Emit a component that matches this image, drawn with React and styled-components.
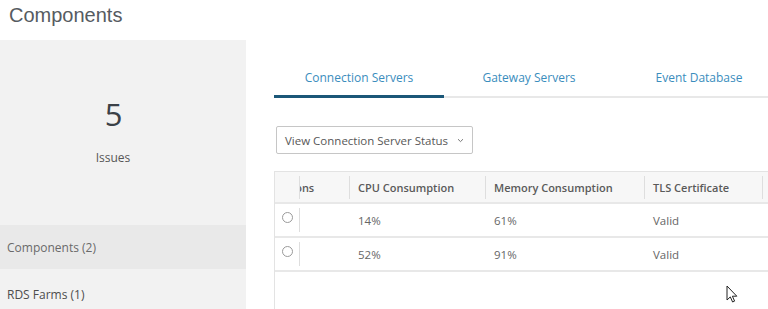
import React from "react";
import styled, { createGlobalStyle } from "styled-components";

const Global = createGlobalStyle`
  html, body { margin: 0; padding: 0; background: #fff; }
  body { font-family: "Open Sans", "Noto Sans", sans-serif; overflow: hidden; }
  * { box-sizing: border-box; }
`;

const Page = styled.div`
  position: relative;
  width: 768px;
  height: 309px;
  overflow: hidden;
`;

const Title = styled.h1`
  margin: 0;
  height: 40px;
  padding: 2px 0 0 9px;
  font-family: "Liberation Sans", Arial, sans-serif;
  font-weight: 400;
  font-size: 20px;
  line-height: 26px;
  color: #565b61;
`;

const Body = styled.div`
  display: flex;
  height: 269px;
`;

const Side = styled.aside`
  width: 246px;
  flex: none;
  background: #f2f2f2;
  display: flex;
  flex-direction: column;
  overflow: hidden;
`;

const Summary = styled.div`
  flex: none;
  height: 185px;
  display: flex;
  flex-direction: column;
  align-items: center;
  padding: 54px 20px 0 0;
`;

const Count = styled.div`
  font-size: 31px;
  line-height: 40px;
  color: #3b4147;
  margin-left: 1px;
`;

const CountLabel = styled.div`
  font-size: 12px;
  line-height: 16px;
  margin-top: 16px;
  color: #565656;
`;

const SideItem = styled.div`
  flex: none;
  height: ${(p) => (p.$active ? "44px" : "50px")};
  display: flex;
  align-items: center;
  padding-left: 7px;
  font-size: 12px;
  background: ${(p) => (p.$active ? "#e9e9e9" : "transparent")};
  color: ${(p) => (p.$active ? "#6a6a6a" : "#4d4d4d")};
`;

const Main = styled.main`
  flex: 1;
  padding-left: 28px;
  min-width: 0;
`;

const Tabs = styled.div`
  display: flex;
  margin-top: 18px;
  border-bottom: 2px solid #e8e8e8;
  width: 600px;
`;

const Tab = styled.div`
  width: 170px;
  flex: none;
  height: 40px;
  display: flex;
  align-items: center;
  justify-content: center;
  font-size: 12px;
  color: #3a8dbd;
  margin-bottom: -2px;
  border-bottom: 3px solid ${(p) => (p.$active ? "#1b5778" : "transparent")};
  padding-top: 2px;
`;

const SelectBox = styled.div`
  margin: 28px 0 0 2px;
  width: 197px;
  height: 28px;
  border: 1px solid #c6c6c6;
  border-radius: 2px;
  display: flex;
  align-items: center;
  justify-content: space-between;
  padding: 0 8px 0 8px;
  font-size: 11.5px;
  color: #575757;
  background: #fff;
`;

const Table = styled.div`
  margin-top: 17px;
  width: 520px;
  height: 160px;
  border: 1px solid #e3e3e3;
  border-right: none;
`;

const Row = styled.div`
  display: flex;
  height: ${(p) => (p.$head ? "32px" : "34px")};
  background: ${(p) => (p.$head ? "#f7f7f7" : "#fff")};
  border-bottom: 2px solid #e8e8e8;
`;

const Cell = styled.div`
  width: ${(p) => p.$w}px;
  flex: none;
  padding: ${(p) => (p.$head ? "4px 0 3px" : "4px 0")};
  overflow: hidden;
`;

const CellInner = styled.div`
  height: 100%;
  border-right: ${(p) => (p.$sep ? "1px solid #dedede" : "none")};
  display: flex;
  align-items: ${(p) => (p.$top ? "flex-start" : "center")};
  padding-left: ${(p) => p.$pad ?? 8}px;
  padding-top: ${(p) => (p.$top ? 4 : 0)}px;
  font-size: ${(p) => (p.$head ? "11px" : "11.5px")};
  font-weight: ${(p) => (p.$head ? 600 : 400)};
  white-space: nowrap;
  color: ${(p) => (p.$head ? "#5a5a5a" : "#666")};
`;

const Clipped = styled.span`
  display: inline-block;
  margin-left: ${(p) => p.$shift}px;
`;

const Radio = styled.span`
  width: 11px;
  height: 11px;
  border-radius: 50%;
  border: 1px solid #9a9a9a;
  background: #fff;
`;

const Cursor = styled.svg`
  position: absolute;
  left: 726px;
  top: 285px;
`;

const cols = [
  { w: 50, label: "Sessions", sep: true },
  { w: 136, label: "CPU Consumption", sep: true },
  { w: 159, label: "Memory Consumption", sep: true },
  { w: 118, label: "TLS Certificate", sep: true },
  { w: 40, label: "", sep: false },
];

const rows = [
  ["", "14%", "61%", "Valid", ""],
  ["", "52%", "91%", "Valid", ""],
];

export default function App() {
  return (
    <Page>
      <Global />
      <Title>Components</Title>
      <Body>
        <Side>
          <Summary>
            <Count>5</Count>
            <CountLabel>Issues</CountLabel>
          </Summary>
          <SideItem $active>Components (2)</SideItem>
          <SideItem>RDS Farms (1)</SideItem>
        </Side>
        <Main>
          <Tabs>
            <Tab $active>Connection Servers</Tab>
            <Tab>Gateway Servers</Tab>
            <Tab>Event Database</Tab>
          </Tabs>
          <SelectBox>
            <span>View Connection Server Status</span>
            <svg width="7" height="5" viewBox="0 0 7 5">
              <path d="M1 1.2 L3.5 3.6 L6 1.2" fill="none" stroke="#777" strokeWidth="1" />
            </svg>
          </SelectBox>
          <Table>
            <Row $head>
              <Cell $w={25} $head>
                <CellInner $sep $head />
              </Cell>
              {cols.map((c, i) => (
                <Cell key={i} $w={c.w} $head>
                  <CellInner $sep={c.sep} $head $pad={i === 0 ? 0 : 8}>
                    {i === 0 ? <Clipped $shift={-31}>{c.label}</Clipped> : c.label}
                  </CellInner>
                </Cell>
              ))}
            </Row>
            {rows.map((r, ri) => (
              <Row key={ri}>
                <Cell $w={25}>
                  <CellInner $sep $top $pad={7}>
                    <Radio />
                  </CellInner>
                </Cell>
                {cols.map((c, i) => (
                  <Cell key={i} $w={c.w}>
                    <CellInner>{r[i]}</CellInner>
                  </Cell>
                ))}
              </Row>
            ))}
          </Table>
        </Main>
      </Body>
      <Cursor width="13" height="19" viewBox="0 0 13 19">
        <path
          d="M1 1 L1 15 L4.3 11.9 L6.6 17 L8.6 16.1 L6.4 11.2 L10.8 11.2 Z"
          fill="#fff"
          stroke="#222"
          strokeWidth="1"
          strokeLinejoin="round"
        />
      </Cursor>
    </Page>
  );
}
